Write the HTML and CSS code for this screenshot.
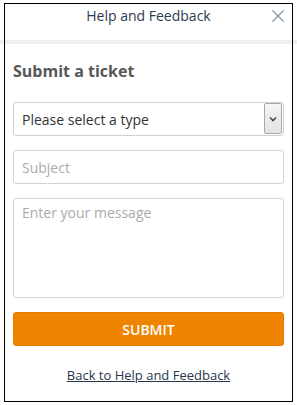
FILE: index.html
```html
<!DOCTYPE html>
<html lang="en">
<head>
<meta charset="utf-8">
<title>Help and Feedback</title>
<link rel="stylesheet" href="styles.css">
</head>
<body>
<div class="frame">
  <header class="header">
    <span></span>
    <h1 class="title">Help and Feedback</h1>
    <button class="close" type="button" aria-label="Close">
      <svg width="12" height="12" viewBox="0 0 12 12"><path d="M0.5 0.5 L11.5 11.5 M11.5 0.5 L0.5 11.5" stroke="#7c8fa3" stroke-width="1.1" fill="none"/></svg>
    </button>
  </header>
  <div class="band"></div>
  <main class="content">
    <h2 class="heading">Submit a ticket</h2>
    <form class="form">
      <div class="select-wrap">
        <select class="select">
          <option>Please select a type</option>
        </select>
        <span class="select-btn">
          <svg width="8" height="6" viewBox="0 0 8 6"><path d="M1 1.5 L4 4.5 L7 1.5" stroke="#4a4a4a" stroke-width="1.6" fill="none"/></svg>
        </span>
      </div>
      <input class="field" type="text" placeholder="Subject">
      <textarea class="field area" placeholder="Enter your message"></textarea>
      <button class="submit" type="button">SUBMIT</button>
    </form>
    <a class="back" href="#">Back to Help and Feedback</a>
  </main>
</div>
</body>
</html>
```

FILE: styles.css
```css
html {
  margin: 0;
  padding: 0;
  background: #fff;
}
body {
  margin: 0;
  padding: 0;
  font-family: "Open Sans", "DejaVu Sans", sans-serif;
}
.frame {
  margin: 3px 4px;
  height: 399px;
  box-sizing: border-box;
  border: 1px solid #000;
  display: flex;
  flex-direction: column;
}
.header {
  height: 36px;
  box-sizing: border-box;
  display: grid;
  grid-template-columns: 1fr auto 1fr;
  align-items: start;
}
.title {
  margin: 0;
  padding-top: 2px;
  font-size: 14px;
  line-height: 19px;
  font-weight: 400;
  color: #2c3b4f;
}
.close {
  justify-self: end;
  margin: 6px 8px 0 0;
  padding: 0;
  border: 0;
  background: transparent;
  width: 12px;
  height: 12px;
  display: block;
}
.close svg { display: block; }
.band {
  height: 4px;
  margin: 0 -5px;
  background: #efefef;
  position: relative;
  z-index: -1;
}
.content {
  padding: 16px 8px 0;
  display: flex;
  flex-direction: column;
}
.heading {
  margin: 0 0 20px;
  font-size: 16px;
  line-height: 22px;
  font-weight: 700;
  color: #575757;
}
.form {
  display: flex;
  flex-direction: column;
  gap: 14px;
}
.select-wrap {
  height: 34px;
  box-sizing: border-box;
  border: 1px solid #cfcfcf;
  border-radius: 3px;
  display: flex;
  padding: 0 1px 0 0;
  align-items: stretch;
  background: #fff;
}
.select {
  flex: 1;
  appearance: none;
  -webkit-appearance: none;
  border: 0;
  background: transparent;
  font-family: inherit;
  font-size: 14px;
  color: #333;
  padding: 0 8px;
  outline: none;
}
.select-btn {
  width: 18px;
  margin: 0 0 1px;
  box-sizing: border-box;
  border: 1px solid #a9a9a9;
  border-radius: 2px;
  background: linear-gradient(#f4f4f4, #e3e3e3);
  display: flex;
  align-items: center;
  justify-content: center;
}
.select-btn svg { display: block; }
.field {
  height: 34px;
  box-sizing: border-box;
  border: 1px solid #d3d3d3;
  border-radius: 3px;
  padding: 0 8px;
  font-family: inherit;
  font-size: 14px;
  color: #333;
  outline: none;
  margin: 0;
  background: #fff;
}
.field::placeholder { color: #aaaaaa; }
.area {
  height: 100px;
  padding: 4px 8px;
  line-height: 20px;
  resize: none;
}
.submit {
  height: 34px;
  border: 1px solid #e57d00;
  border-radius: 3px;
  background: #f08300;
  color: #fff;
  font-family: inherit;
  font-size: 14px;
  font-weight: 600;
  margin: 0;
  padding: 0;
}
.back {
  margin-top: 20px;
  align-self: center;
  font-size: 13px;
  line-height: 18px;
  color: #27364a;
  text-decoration: underline;
}
```
